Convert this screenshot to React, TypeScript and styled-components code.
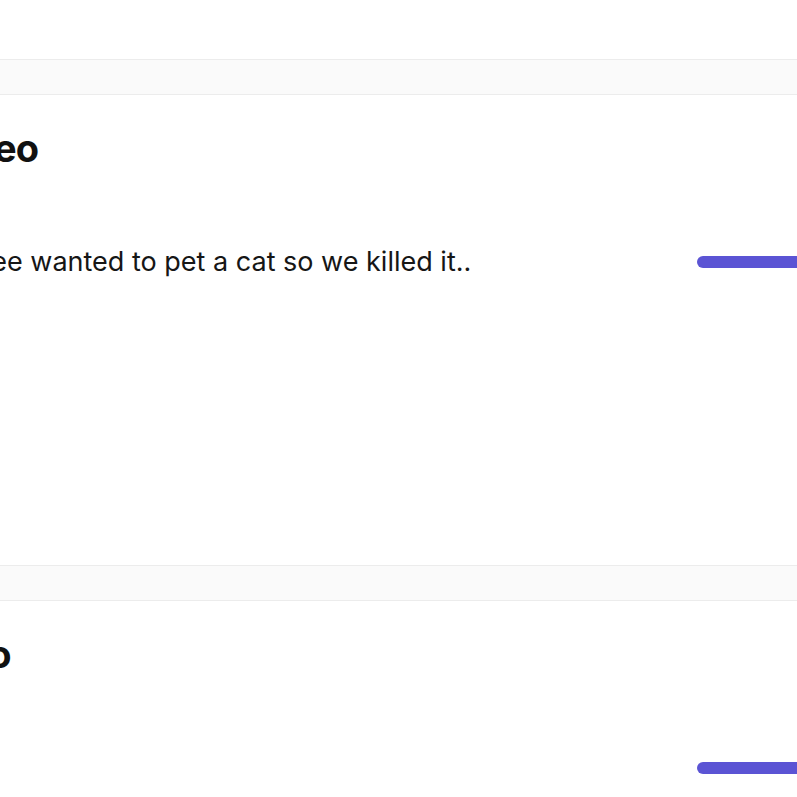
import React from 'react';
import styled, { createGlobalStyle } from 'styled-components';

const GlobalStyle = createGlobalStyle`
    html, body {
        margin: 0;
        padding: 0;
        background: #f9f9f9;
        overflow: hidden;
    }
    body {
        font-family: Inter, 'Noto Sans', 'Liberation Sans', sans-serif;
        color: #111111;
        -webkit-font-smoothing: antialiased;
    }
`;

const List = styled.div`
    display: flex;
    flex-direction: column;
    gap: 34px;
    width: 100%;
    background: linear-gradient(#f3f3f3, #fafafa 12px);
`;

const Card = styled.div<{ $height?: number; $open?: boolean }>`
    box-sizing: border-box;
    height: ${({ $height }) => $height ?? 472}px;
    background: #ffffff;
    border-top: ${({ $open }) => ($open ? 'none' : '1px solid #ececec')};
    border-bottom: 1px solid #ececec;
    overflow: hidden;
`;

const Inner = styled.div<{ $shift: number }>`
    display: flex;
    flex-direction: column;
    gap: 72px;
    padding-top: 29px;
    margin-left: ${({ $shift }) => -$shift}px;
    margin-right: -300px;
`;

const Title = styled.h2`
    margin: 0;
    font-size: 38px;
    line-height: 48px;
    font-weight: 700;
    letter-spacing: -0.8px;
    white-space: nowrap;
`;

const Row = styled.div`
    display: flex;
    align-items: center;
    min-height: 36px;
`;

const Caption = styled.p`
    margin: 0;
    font-size: 27px;
    line-height: 36px;
    color: #161616;
    white-space: nowrap;
`;

const Track = styled.div`
    width: 400px;
    height: 12px;
    margin-left: auto;
    border-radius: 6px;
    background: #5b54d4;
    flex-shrink: 0;
`;

type Clip = { title: string; caption?: string };

const clips: Clip[] = [
    { title: 'A Video', caption: 'Employee wanted to pet a cat so we killed it..' },
    { title: 'Memo' },
];

const App: React.FC = () => (
    <>
        <GlobalStyle />
        <List>
            <Card $height={60} $open />
            {clips.map((clip, i) => (
                <Card key={i}>
                    <Inner $shift={102}>
                        <Title>{clip.title}</Title>
                        <Row>
                            {clip.caption && <Caption>{clip.caption}</Caption>}
                            <Track />
                        </Row>
                    </Inner>
                </Card>
            ))}
        </List>
    </>
);

export default App;
